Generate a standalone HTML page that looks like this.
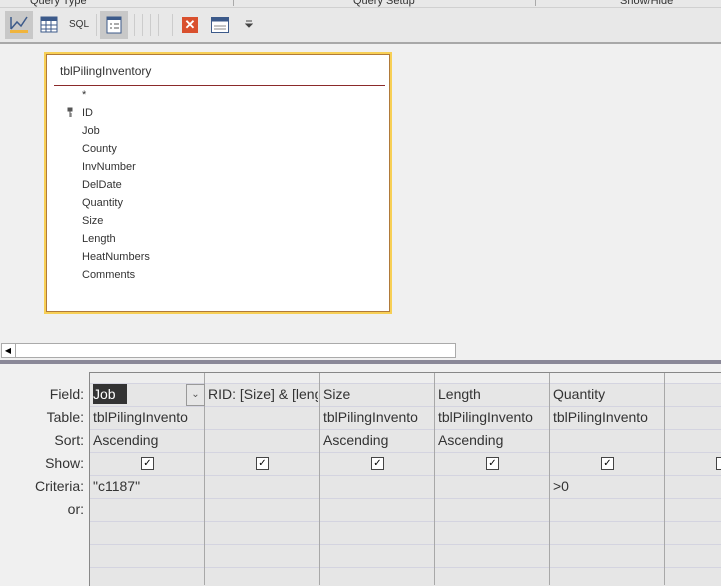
<!DOCTYPE html><html><head><style>
body{margin:0;width:721px;height:585px;overflow:hidden;background:#f0f0f0;font-family:"Liberation Sans",sans-serif;position:relative}
.a{position:absolute}
.tb{left:0;top:0;width:721px;height:42px;background:#e8e8e8;border-bottom:2px solid #a8a8a8}
.lbl{font-size:11px;color:#333;top:-5px}
.box{left:44px;top:52px;width:344px;height:258px;background:#fff;border:2px solid #f7cf55;outline:1px solid #b07a3a;outline-offset:-3px}
.fl{font-size:11px;color:#333;left:82px}
.gl{position:absolute;left:0;width:84px;text-align:right;font-size:14px;color:#333}
.cell{position:absolute;font-size:14px;color:#333;white-space:nowrap;overflow:hidden}
.cb{position:absolute;width:11px;height:11px;border:1px solid #444;background:#fff;font-size:10px;line-height:11px;text-align:center}
</style></head><body>
<div class="a tb"></div>
<div class="a lbl" style="left:30px">Query Type</div>
<div class="a" style="left:233px;top:0;width:1px;height:6px;background:#aaa"></div>
<div class="a lbl" style="left:353px">Query Setup</div>
<div class="a" style="left:535px;top:0;width:1px;height:6px;background:#aaa"></div>
<div class="a lbl" style="left:620px">Show/Hide</div>
<div class="a" style="left:0;top:7px;width:721px;height:1px;background:#d0d0d0"></div>
<div class="a" style="left:5px;top:11px;width:28px;height:28px;background:#c8c8c8"></div>
<svg class="a" style="left:9px;top:15px" width="20" height="20"><path d="M2 2v12M2 14l6-7 4 4 6-9" stroke="#3c5a8a" stroke-width="1.5" fill="none"/><rect x="1" y="15" width="18" height="3" fill="#f0b43c"/></svg>
<svg class="a" style="left:40px;top:16px" width="18" height="17"><rect x="1" y="1" width="16" height="15" fill="#fff" stroke="#3c5a8a"/><rect x="1" y="1" width="16" height="4" fill="#3c5a8a"/><path d="M6 5v11M11 5v11M1 9h16M1 13h16" stroke="#3c5a8a"/></svg>
<div class="a" style="left:69px;top:19px;font-size:10px;color:#333">SQL</div>
<div class="a" style="left:96px;top:14px;width:1px;height:22px;background:#ccc"></div>
<div class="a" style="left:100px;top:11px;width:28px;height:28px;background:#c8c8c8"></div>
<svg class="a" style="left:106px;top:16px" width="16" height="18"><rect x="1" y="1" width="14" height="16" fill="#fff" stroke="#3c5a8a"/><rect x="1" y="1" width="14" height="3" fill="#3c5a8a"/><path d="M4 8h2M8 8h5M4 12h2M8 12h5" stroke="#555"/></svg>
<div class="a" style="left:134px;top:14px;width:1px;height:22px;background:#ccc"></div>
<div class="a" style="left:142px;top:14px;width:1px;height:22px;background:#ccc"></div>
<div class="a" style="left:150px;top:14px;width:1px;height:22px;background:#ccc"></div>
<div class="a" style="left:158px;top:14px;width:1px;height:22px;background:#ccc"></div>
<div class="a" style="left:172px;top:14px;width:1px;height:22px;background:#ccc"></div>
<div class="a" style="left:182px;top:17px;width:16px;height:16px;background:#d9502e;color:#fff;font-size:13px;font-weight:bold;line-height:16px;text-align:center">✕</div>
<svg class="a" style="left:211px;top:17px" width="18" height="16"><rect x="0.5" y="0.5" width="17" height="15" fill="#fff" stroke="#3c5a8a"/><rect x="0.5" y="0.5" width="17" height="4" fill="#3c5a8a"/><path d="M3 9h12M3 12h12" stroke="#888"/></svg>
<svg class="a" style="left:245px;top:20px" width="8" height="8"><path d="M1 1h6M1 4h6l-3 3z" stroke="#444" fill="#444"/></svg>
<div class="a box"></div>
<div class="a" style="left:60px;top:64px;font-size:12px;color:#333">tblPilingInventory</div>
<div class="a" style="left:54px;top:85px;width:331px;height:1px;background:#8b2a2a"></div>
<div class="a fl" style="top:89px">*</div>
<svg class="a" style="left:67px;top:107px" width="6" height="11"><rect x="0.5" y="0.5" width="5" height="4" fill="#555"/><path d="M3 4v6M3 7h2M3 9h2" stroke="#555"/></svg>
<div class="a fl" style="top:107px">ID</div>
<div class="a fl" style="top:125px">Job</div>
<div class="a fl" style="top:143px">County</div>
<div class="a fl" style="top:161px">InvNumber</div>
<div class="a fl" style="top:179px">DelDate</div>
<div class="a fl" style="top:197px">Quantity</div>
<div class="a fl" style="top:215px">Size</div>
<div class="a fl" style="top:233px">Length</div>
<div class="a fl" style="top:251px">HeatNumbers</div>
<div class="a fl" style="top:269px">Comments</div>
<div class="a" style="left:1px;top:343px;width:453px;height:13px;background:#fff;border:1px solid #aaa"></div>
<div class="a" style="left:1px;top:343px;width:14px;height:15px;border-right:1px solid #aaa;font-size:8px;line-height:15px;text-align:center">◀</div>
<div class="a" style="left:0;top:360px;width:721px;height:4px;background:#8a8898"></div>
<div class="a" style="left:89px;top:372px;width:632px;height:213px;background:#e6e6e6;border-left:1px solid #888;border-top:1px solid #888"></div>
<div class="a" style="left:90px;top:373px;width:631px;height:10px;background:#eeeeee"></div>
<div id="g"></div>
<div class="a" style="left:93px;top:384px;width:34px;height:20px;background:#333"></div>
<div class="a" style="left:186px;top:384px;width:17px;height:20px;border:1px solid #999;font-size:10px;line-height:20px;text-align:center;color:#555">⌄</div>
<div class="gl" style="top:386px">Field:</div><div class="gl" style="top:409px">Table:</div><div class="gl" style="top:432px">Sort:</div><div class="gl" style="top:455px">Show:</div><div class="gl" style="top:478px">Criteria:</div><div class="gl" style="top:501px">or:</div>
<div class="cell" style="left:93px;top:386px;color:#fff">Job</div>
<div class="cell" style="left:208px;top:386px;width:110px">RID: [Size] &amp; [length]</div>
<div class="cell" style="left:323px;top:386px">Size</div>
<div class="cell" style="left:438px;top:386px">Length</div>
<div class="cell" style="left:553px;top:386px">Quantity</div>
<div class="cell" style="left:93px;top:409px;width:110px">tblPilingInvento</div>
<div class="cell" style="left:323px;top:409px;width:110px">tblPilingInvento</div>
<div class="cell" style="left:438px;top:409px;width:110px">tblPilingInvento</div>
<div class="cell" style="left:553px;top:409px;width:110px">tblPilingInvento</div>
<div class="cell" style="left:93px;top:432px">Ascending</div>
<div class="cell" style="left:323px;top:432px">Ascending</div>
<div class="cell" style="left:438px;top:432px">Ascending</div>
<div class="cell" style="left:93px;top:478px">"c1187"</div>
<div class="cell" style="left:553px;top:478px">&gt;0</div>
<div class="cb" style="left:141px;top:457px">✓</div><div class="cb" style="left:256px;top:457px">✓</div><div class="cb" style="left:371px;top:457px">✓</div><div class="cb" style="left:486px;top:457px">✓</div><div class="cb" style="left:601px;top:457px">✓</div><div class="cb" style="left:716px;top:457px"></div>
<script>
var g=document.getElementById('g'),h='';
[383,406,429,452,475,498,521,544,567].forEach(function(y){h+='<div class="a" style="left:90px;top:'+y+'px;width:631px;height:1px;background:#d4d4e0"></div>'});
[204,319,434,549,664].forEach(function(x){h+='<div class="a" style="left:'+x+'px;top:373px;width:1px;height:212px;background:#a8a8a8"></div>'});
g.innerHTML=h;
</script>
</body></html>
